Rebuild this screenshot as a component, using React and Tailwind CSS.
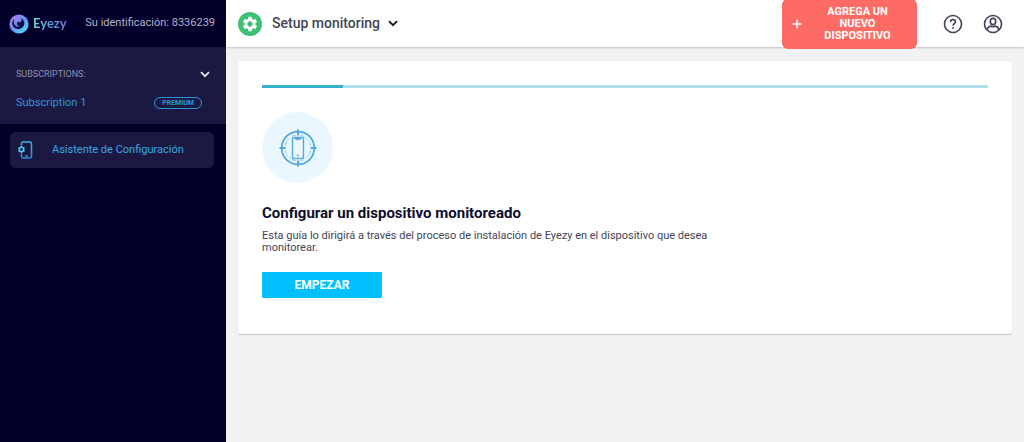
import { useState } from 'react'
import { MdSettings } from 'react-icons/md'

const SUBSCRIPTIONS = [{ id: 1, name: 'Subscription 1', plan: 'PREMIUM' }]

const EyezyLogo = () => (
  <svg width="20" height="20" viewBox="0 0 20 20" className="shrink-0" aria-hidden="true">
    <defs>
      <linearGradient id="eye" x1="3" y1="2" x2="16" y2="18" gradientUnits="userSpaceOnUse">
        <stop offset="0" stopColor="#b07be8" />
        <stop offset="0.5" stopColor="#6c8ff0" />
        <stop offset="1" stopColor="#4fdcf5" />
      </linearGradient>
    </defs>
    <circle cx="10" cy="10" r="9.6" fill="url(#eye)" />
    <path d="M5.200 4.800C3.200 6.600 2.600 9.600 4 12c1.500 2.700 4.900 3.700 7.700 2.500 2.400-1 3.900-3.400 3.600-5.800-.2-2.200-1.600-3.700-3.500-4.300 1 1.300.9 2.900-.1 3.600-.9.600-2 .2-2.200-.8-1.400.7-1.900 2.200-1.200 3.500.5 1 1.500 1.500 2.700 1.600-2.400.9-4.900-.1-5.800-2.300-.7-1.800-.5-3.700 0-5.200z" fill="#141047" />
  </svg>
)

const ChevronDown = () => (
  <svg width="10" height="7" viewBox="0 0 10 7" fill="none" stroke="currentColor" strokeWidth="1.8" aria-hidden="true">
    <path d="M1 1.200l4 4 4-4" />
  </svg>
)

const SetupIcon = () => (
  <svg width="16" height="18" viewBox="0 0 16 18" fill="none" strokeWidth="1.500" className="shrink-0" aria-hidden="true">
    <defs>
      <linearGradient id="setup" x1="8" y1="0" x2="8" y2="18" gradientUnits="userSpaceOnUse">
        <stop offset="0" stopColor="#3fb8e0" />
        <stop offset="1" stopColor="#2f86d6" />
      </linearGradient>
    </defs>
    <path d="M3.500 4.500V2.500c0-1 .7-1.600 1.600-1.600h6.800c.9 0 1.600.6 1.600 1.600v12.900c0 1-.7 1.600-1.600 1.600H5.100c-.9 0-1.600-.6-1.600-1.600v-2.900M7 15h3" stroke="url(#setup)" />
    <circle cx="3.500" cy="8.500" r="2.200" stroke="#4cc8f0" />
    <path d="M3.500 5v1.300M3.500 10.700V12M.5 6.700l1.100.7M5.400 9.600l1.100.7M.5 10.300l1.100-.7M5.400 7.400l1.100-.7" stroke="#4cc8f0" />
  </svg>
)

const HelpIcon = () => (
  <svg width="20" height="20" viewBox="0 0 20 20" fill="none" stroke="currentColor" strokeWidth="1.600" aria-hidden="true">
    <circle cx="10" cy="10" r="8.500" />
    <path d="M7.500 8c0-1.500 1.100-2.500 2.500-2.500s2.500 1 2.500 2.300c0 1.700-2.400 1.900-2.400 3.900" />
    <path d="M10.100 13.100v1.700" />
  </svg>
)

const UserIcon = () => (
  <svg width="20" height="20" viewBox="0 0 20 20" fill="none" stroke="currentColor" strokeWidth="1.600" aria-hidden="true">
    <circle cx="10" cy="10" r="8.500" />
    <ellipse cx="10" cy="7.500" rx="2.700" ry="3.100" />
    <path d="M4 16c.5-2.200 2-3.700 4.200-3.900.9.700 2.700.7 3.600 0 2.200.2 3.700 1.700 4.200 3.900" />
  </svg>
)

const TargetPhone = () => (
  <svg width="38" height="38" viewBox="0 0 38 38" fill="none" stroke="#50a9db" aria-hidden="true">
    <circle cx="19" cy="19" r="16.300" strokeWidth="1.800" />
    {/* tick marks just inside the ring, broken at the cross hairs */}
    <path d="M21.500 6.300A13 13 0 0 1 31.700 16.500M31.700 21.500A13 13 0 0 1 21.500 31.700M16.500 31.700A13 13 0 0 1 6.300 21.500M6.300 16.500A13 13 0 0 1 16.500 6.300" strokeWidth="1" strokeOpacity="0.7" strokeDasharray="4 1.500 2 1.500 1 2" />
    <path d="M19 .5v6M19 31.500v6M.5 19h6M31.500 19h6" strokeWidth="2" />
    <rect x="13.500" y="8.500" width="11" height="21" rx="1.800" strokeWidth="1.400" />
    <path d="M16.300 9h5.400l-.6 1.700h-4.200z" fill="#50a9db" strokeWidth=".6" />
    <circle cx="19" cy="26.500" r=".9" fill="#50a9db" stroke="none" />
  </svg>
)

const Sidebar = () => {
  const [open, setOpen] = useState(true)

  return (
    <aside className="w-[226px] shrink-0 bg-[#02002b]">
      <div className="flex h-[47px] items-center justify-between pl-[9px] pr-[11px]">
        <a href="#" className="flex items-center gap-1">
          <EyezyLogo />
          <span className="bg-linear-to-r from-[#70d9cf] via-[#5a9fe0] to-[#707ee0] bg-clip-text font-['Lato',sans-serif] text-[13px] font-bold text-transparent">Eyezy</span>
        </a>
        <span className="text-[11px] text-[#b5b3cc]">Su identificación: 8336239</span>
      </div>

      <section className="bg-[#1b1842] px-4 pt-[18px] pb-3">
        <button onClick={() => setOpen(!open)} className="flex w-full items-center justify-between text-[#e4e3f0]">
          <span className="text-[9px] leading-[18px] text-[#908eae]">SUBSCRIPTIONS:</span>
          <ChevronDown />
        </button>
        {open && SUBSCRIPTIONS.map((sub) => (
          <a key={sub.id} href="#" className="mt-[11px] flex items-center justify-between pr-2 text-[#2f96d8]">
            <span className="text-[11px] leading-[18px]">{sub.name}</span>
            <span className="rounded-full border border-[#2f96d8] px-[7px] text-[7px] leading-[10px] font-bold">{sub.plan}</span>
          </a>
        ))}
      </section>

      <nav className="py-2 pl-[10px] pr-3">
        <a href="#" className="flex h-9 items-center gap-[18px] rounded-md bg-[#1b1842] pl-2 text-[11px] text-[#38a9e2]">
          <SetupIcon />
          Asistente de Configuración
        </a>
      </nav>
    </aside>
  )
}

const Header = () => (
  <header className="flex h-[47px] items-center bg-white pl-3 pr-[21px] text-[#414452] shadow-[0_1px_2px_rgba(0,0,0,0.2)]">
    <span className="flex size-6 items-center justify-center rounded-full bg-[#3cc173] text-white">
      <MdSettings size={18} />
    </span>
    <button className="ml-[10px] flex items-center gap-2 text-[14px] font-medium">
      Setup monitoring
      <span className="text-[#15151f]"><ChevronDown /></span>
    </button>
    <button className="ml-auto flex w-[135px] shrink-0 items-center rounded-md bg-[#fe6b64] py-[7px] pl-[10px] pr-5 text-white">
      <svg width="10" height="10" viewBox="0 0 10 10" stroke="currentColor" strokeWidth="1.500" className="shrink-0" aria-hidden="true">
        <path d="M5 .5v9M.5 5h9" />
      </svg>
      <span className="grow pl-4 text-center text-[11px] leading-3 font-bold">AGREGA UN NUEVO DISPOSITIVO</span>
    </button>
    <button aria-label="Ayuda" className="ml-[26px]"><HelpIcon /></button>
    <button aria-label="Cuenta" className="ml-5"><UserIcon /></button>
  </header>
)

export default function App() {
  return (
    <div className="flex min-h-screen bg-[#f2f2f5] font-['Roboto',sans-serif]">
      <Sidebar />
      <div className="flex min-w-0 grow flex-col">
        <Header />
        <main className="px-3 pt-[14px]">
          <div className="rounded-xs bg-white px-6 pt-6 pb-9 shadow-[0_1px_1px_rgba(0,0,0,0.2)]">
            <div className="h-[3px] bg-[#aee2ea]" role="progressbar" aria-label="Progreso" aria-valuenow={1} aria-valuemin={0} aria-valuemax={9}>
              <div className="h-full w-1/9 bg-[#35b1cb]" />
            </div>
            <div className="mt-6 flex size-[71px] items-center justify-center rounded-full bg-[#ebf7fe]">
              <TargetPhone />
            </div>
            <h1 className="mt-5 text-[15px] leading-5 font-bold text-[#0e0c2e]">Configurar un dispositivo monitoreado</h1>
            <p className="mt-[7px] max-w-[450px] text-[11px] leading-3 text-[#434354]">
              Esta guía lo dirigirá a través del proceso de instalación de Eyezy en el dispositivo que desea monitorear.
            </p>
            <button className="mt-[18px] h-[26px] w-[120px] rounded-[1px] bg-[#00c0ff] text-[12px] font-bold text-white">EMPEZAR</button>
          </div>
        </main>
      </div>
    </div>
  )
}
